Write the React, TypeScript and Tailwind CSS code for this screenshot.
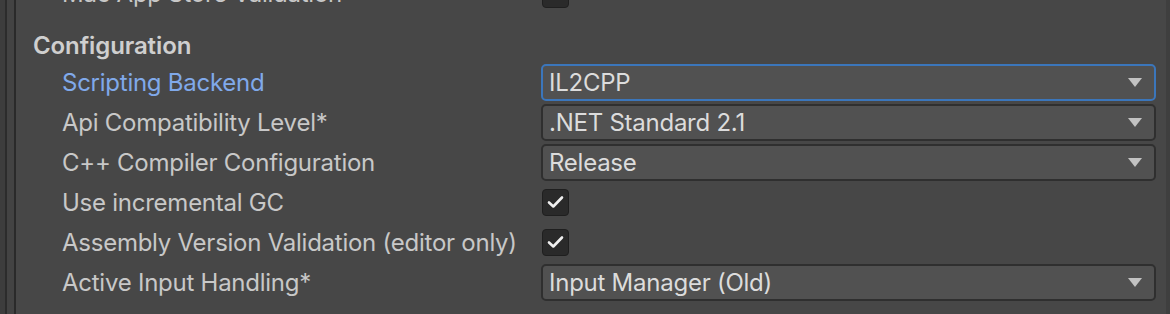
import React from "react";

type Row =
  | { kind: "select"; label: string; value: string; focused?: boolean }
  | { kind: "check"; label: string; checked: boolean };

const rows: Row[] = [
  { kind: "select", label: "Scripting Backend", value: "IL2CPP", focused: true },
  { kind: "select", label: "Api Compatibility Level*", value: ".NET Standard 2.1" },
  { kind: "select", label: "C++ Compiler Configuration", value: "Release" },
  { kind: "check", label: "Use incremental GC", checked: true },
  { kind: "check", label: "Assembly Version Validation (editor only)", checked: true },
  { kind: "select", label: "Active Input Handling*", value: "Input Manager (Old)" },
];

function Arrow() {
  return (
    <svg width="14" height="9" viewBox="0 0 14 9" className="shrink-0">
      <path d="M0 0 H14 L7 9 Z" fill="#c2c2c2" />
    </svg>
  );
}

function Checkbox({ checked }: { checked: boolean }) {
  return (
    <div className="flex h-[27px] w-[27px] items-center justify-center rounded-[4px] border border-[#1f1f1f] bg-[#2a2a2a]">
      {checked ? (
        <svg width="17" height="14" viewBox="0 0 17 14">
          <path
            d="M2 7.5 L6.3 11.5 L15 2.5"
            fill="none"
            stroke="#f0f0f0"
            strokeWidth="2.6"
            strokeLinecap="round"
            strokeLinejoin="round"
          />
        </svg>
      ) : null}
    </div>
  );
}

function Select({ value, focused }: { value: string; focused?: boolean }) {
  return (
    <div
      className={
        focused
          ? "flex h-[37px] w-[615px] items-center justify-between rounded-[5px] border-2 border-[#3b76bb] bg-[#515151] pl-[6px] pr-[12px]"
          : "flex h-[37px] w-[615px] items-center justify-between rounded-[5px] border-2 border-[#2f2f2f] bg-[#515151] pl-[6px] pr-[12px]"
      }
    >
      <span className="whitespace-nowrap pt-px text-[24px] leading-[28px] tracking-[-0.25px] text-[#dcdcdc]">
        {value}
      </span>
      <Arrow />
    </div>
  );
}

export default function App() {
  return (
    <div
      className="flex h-[314px] w-[1170px] overflow-hidden bg-[#474747]"
      style={{ fontFamily: "Inter, 'Noto Sans', sans-serif" }}
    >
      <div className="flex shrink-0">
        <div className="w-[5px] bg-[#3d3d3d]" />
        <div className="w-[2px] bg-[#2c2c2c]" />
        <div className="w-[7px] bg-[#434343]" />
        <div className="w-[2px] bg-[#2a2a2a]" />
      </div>

      <div className="flex min-w-0 flex-1 flex-col">
        <div className="mt-[-26px] flex h-10 items-center">
          <span className="w-[525px] shrink-0 pl-[46px] text-[24px] leading-[28px] tracking-[-0.25px] text-[#c8c8c8]">
            Mac App Store Validation
          </span>
          <div className="pl-px">
            <Checkbox checked={false} />
          </div>
        </div>

        <div className="mt-[16px] flex h-8 items-center pl-[17px] text-[24px] leading-[28px] font-semibold tracking-[-0.1px] text-[#cfcfcf]">
          Configuration
        </div>

        {rows.map((r) => (
          <div key={r.label} className="flex h-10 items-center">
            <span
              className={
                r.kind === "select" && r.focused
                  ? "w-[525px] shrink-0 pl-[46px] pt-px text-[24px] leading-[28px] tracking-[-0.25px] text-[#80a9ea]"
                  : "w-[525px] shrink-0 pl-[46px] pt-px text-[24px] leading-[28px] tracking-[-0.25px] text-[#c8c8c8]"
              }
            >
              {r.label}
            </span>
            {r.kind === "select" ? (
              <Select value={r.value} focused={r.focused} />
            ) : (
              <div className="pl-px">
                <Checkbox checked={r.checked} />
              </div>
            )}
          </div>
        ))}
      </div>

      <div className="w-[4px] shrink-0 bg-[#3f3f3f]" />
    </div>
  );
}
